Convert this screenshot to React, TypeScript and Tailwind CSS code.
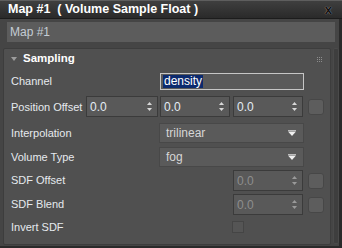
import React from 'react';

const SpinArrows = ({ color }: { color: string }) => (
  <svg width="5" height="9" viewBox="0 0 5 9" className="shrink-0">
    <path d="M2.5 0 L5 3 L0 3 Z" fill={color} />
    <path d="M2.5 9 L5 6 L0 6 Z" fill={color} />
  </svg>
);

const DropArrow = () => (
  <svg width="8" height="6" viewBox="0 0 8 6" className="shrink-0">
    <rect x="0" y="0" width="8" height="1" fill="#bdbdbd" />
    <path d="M0 1.5 L8 1.5 L4 6 Z" fill="#f0f0f0" />
  </svg>
);

interface SpinnerProps {
  value: string;
  width: string;
  disabled?: boolean;
}

const Spinner: React.FC<SpinnerProps> = ({ value, width, disabled }) => (
  <div
    className={`${width} shrink-0 h-[21px] flex items-center justify-between pl-[3px] pr-[5px] bg-[#595959] border border-[#3b3b3b] ${
      disabled ? 'text-[#8e8e8e]' : 'text-[#e4ecf4]'
    }`}
  >
    <span>{value}</span>
    <SpinArrows color={disabled ? '#9a9a9a' : '#d8d8d8'} />
  </div>
);

const MapButton = () => (
  <div className="shrink-0 w-[16px] h-[16px] rounded-[3px] bg-[#5d5d5d] border border-[#474747] ml-[5px]" />
);

const Dropdown = ({ value }: { value: string }) => (
  <div className="ml-auto w-[145px] h-[20px] flex items-center justify-between pl-[6px] pr-[7px] bg-[#5a5a5a] border border-[#484848] text-[#d6d6d6] text-[12px]">
    <span>{value}</span>
    <DropArrow />
  </div>
);

const Label = ({ children }: { children: React.ReactNode }) => (
  <span className="text-[#e6eaee] text-[11px] whitespace-nowrap">{children}</span>
);

export default function App() {
  return (
    <div className="w-[342px] h-[248px] bg-[#454545] flex flex-col overflow-hidden text-[12px] font-['Liberation_Sans',Arial,sans-serif]">
      <div className="h-[19px] shrink-0 border-t border-[#5e5e5e] border-b border-b-[#1c1c1c] bg-gradient-to-b from-[#3f3f3f] to-[#2a2a2a] flex items-center justify-between pl-[8px] pr-[10px]">
        <span className="text-white font-bold text-[12.5px] whitespace-pre leading-none">Map #1  ( Volume Sample Float )</span>
        <span className="text-[#111] font-bold text-[13px] leading-none [text-shadow:0_0_1px_#bbb]">x</span>
      </div>

      <div className="flex-1 flex flex-col border-r-[3px] border-b-[2px] border-[#2a2a2a]">
        <div className="pl-[7px] pr-[4px] pt-[3px]">
          <div className="h-[20px] bg-[#5c5c5c] flex items-center pl-[3px] text-[#c4ccd4]">Map #1</div>
        </div>

        <div className="flex-1 flex pl-[3px] pt-[6px] pb-[1px] gap-[2px]">
          <div className="flex-1 bg-[#505050] border border-[#3d3d3d] rounded-[2px] flex flex-col">
            <div className="h-[20px] flex items-center pl-[7px] pr-[8px]">
              <svg width="6" height="4" viewBox="0 0 6 4" className="mr-[6px]">
                <path d="M0 0 L6 0 L3 4 Z" fill="#9c9c9c" />
              </svg>
              <span className="text-white font-bold text-[11.5px]">Sampling</span>
              <div className="ml-auto grid grid-cols-3 gap-[1px]">
                {Array.from({ length: 9 }).map((_, i) => (
                  <div key={i} className="w-[1px] h-[1px] bg-[#8c8c8c]" />
                ))}
              </div>
            </div>

            <div className="flex flex-col pl-[7px] pr-[6px]">
              <div className="h-[17px] mt-[4px] flex items-center">
                <Label>Channel</Label>
                <div className="ml-auto mr-[20px] w-[144px] h-[17px] border border-[#c6c6c6] bg-[#5a5a5a] flex items-center pl-[2px]">
                  <span className="bg-[#0c2a6e] text-white leading-[13px] px-[1px]">density</span>
                </div>
              </div>

              <div className="h-[21px] mt-[6px] flex items-center">
                <div className="w-[75px] shrink-0">
                  <Label>Position Offset</Label>
                </div>
                <Spinner value="0.0" width="w-[72px]" />
                <Spinner value="0.0" width="w-[70px] ml-[2px]" />
                <Spinner value="0.0" width="w-[70px] ml-[3px]" />
                <MapButton />
              </div>

              <div className="h-[20px] mt-[6px] flex items-center pr-[20px]">
                <Label>Interpolation</Label>
                <Dropdown value="trilinear" />
              </div>

              <div className="h-[20px] mt-[4px] flex items-center pr-[20px]">
                <Label>Volume Type</Label>
                <Dropdown value="fog" />
              </div>

              <div className="h-[21px] mt-[3px] flex items-center">
                <Label>SDF Offset</Label>
                <div className="ml-auto flex items-center">
                  <Spinner value="0.0" width="w-[70px]" disabled />
                  <MapButton />
                </div>
              </div>

              <div className="h-[21px] mt-[3px] flex items-center">
                <Label>SDF Blend</Label>
                <div className="ml-auto flex items-center">
                  <Spinner value="0.0" width="w-[70px]" disabled />
                  <MapButton />
                </div>
              </div>

              <div className="h-[14px] mt-[5px] flex items-center">
                <Label>Invert SDF</Label>
                <div className="ml-auto mr-[80px] w-[12px] h-[12px] bg-[#555555] border border-[#454545]" />
              </div>
            </div>
          </div>
          <div className="w-[6px] mb-[1px] bg-[#3e3e3e] border border-[#4a4a4a] rounded-[2px]" />
        </div>
      </div>
    </div>
  );
}
